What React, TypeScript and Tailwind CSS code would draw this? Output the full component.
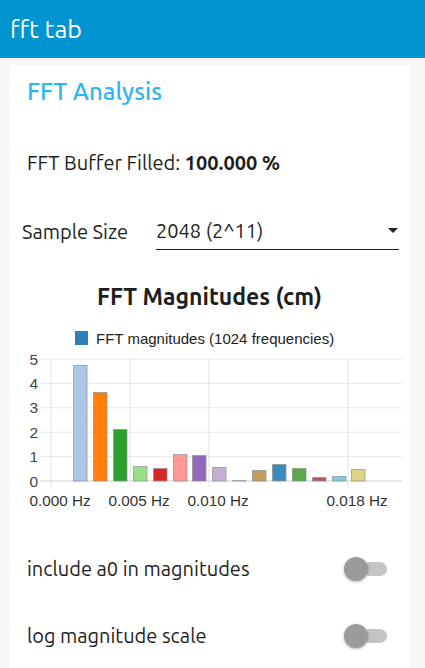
const bars = [
  { x: 73, top: 365, color: '#aec7e8' },
  { x: 93, top: 392, color: '#ff7f0e' },
  { x: 113, top: 429, color: '#2ca02c' },
  { x: 133, top: 466, color: '#98df8a' },
  { x: 153, top: 468, color: '#d62728' },
  { x: 173, top: 454, color: '#ff9896' },
  { x: 192, top: 455, color: '#9467bd' },
  { x: 212, top: 467, color: '#c5b0d5' },
  { x: 232, top: 480, color: '#c7c7c7' },
  { x: 252, top: 470, color: '#c49c5e' },
  { x: 272, top: 464, color: '#3b8bc2' },
  { x: 292, top: 468, color: '#59a84a' },
  { x: 312, top: 477, color: '#b0566f' },
  { x: 332, top: 476, color: '#80cbe3' },
  { x: 351, top: 469, color: '#dbd585' },
];

const yTicks = [5, 4, 3, 2, 1, 0];
const xTicks = [
  { x: 51, label: '0.000 Hz' },
  { x: 130, label: '0.005 Hz' },
  { x: 209, label: '0.010 Hz' },
  { x: 348, label: '0.018 Hz' },
];

function MagnitudeChart() {
  const base = 481;
  const unit = 24.4;
  return (
    <svg width={399} height={204} viewBox="10 311 399 204" className="block">
      <g fontFamily="'Liberation Sans', Arial, sans-serif">
        <rect x={75} y={331} width={13} height={14} fill="#2f7fba" />
        <text x={96} y={344} fontSize={15} fill="#222">
          FFT magnitudes (1024 frequencies)
        </text>
        {yTicks.map((t) => (
          <g key={t}>
            <line
              x1={40}
              x2={402}
              y1={base - t * unit}
              y2={base - t * unit}
              stroke={t === 0 ? '#cfcfcf' : '#e8e8e8'}
              strokeWidth={1}
            />
            <text x={38} y={base - t * unit + 5.5} fontSize={15.5} textAnchor="end" fill="#444">
              {t}
            </text>
          </g>
        ))}
        {xTicks.map((t) => (
          <g key={t.label}>
            <line x1={t.x} x2={t.x} y1={358} y2={487} stroke="#e2e2e2" strokeWidth={1} />
            <text x={t.x + 9} y={506} fontSize={15.3} textAnchor="middle" fill="#333">
              {t.label}
            </text>
          </g>
        ))}
        {bars.map((b, i) => (
          <rect
            key={i}
            x={b.x + 0.5}
            y={b.top + 0.5}
            width={13.5}
            height={Math.max(base - b.top - 0.5, 0.5)}
            fill={b.color}
            stroke="#8f8f8f"
            strokeOpacity={0.7}
            strokeWidth={1}
          />
        ))}
      </g>
    </svg>
  );
}

function Toggle() {
  return (
    <div className="relative h-[26px] w-[44px]">
      <div className="absolute left-[20px] top-[6px] h-[14px] w-[24px] rounded-full bg-[#c4c4c4]" />
      <div className="absolute left-[1px] top-[1px] h-[24px] w-[24px] rounded-full bg-[#9b9b9b] shadow-[0_1px_3px_rgba(0,0,0,0.3)]" />
    </div>
  );
}

export default function App() {
  return (
    <div
      className="min-h-[668px] bg-[#f7f7f7] text-[#1e1e1e]"
      style={{ fontFamily: "Ubuntu, 'Noto Sans', sans-serif" }}
    >
      <header className="flex h-[58px] items-center bg-[#0095d0] px-[10px]">
        <h1 className="text-[25px] leading-none text-white">fft tab</h1>
      </header>

      <main className="ml-[10px] mt-[7px] w-[399px] bg-white pt-[12px]">
        <h2 className="pl-[17px] text-[24px] font-medium leading-[30px] text-[#2bb6f0]">FFT Analysis</h2>

        <p className="mt-[44px] pl-[17px] text-[20px] leading-[24px]">
          FFT Buffer Filled: <span className="font-bold">100.000 %</span>
        </p>

        <div className="mt-[39px] flex h-[36px] items-center pl-[12px] pr-[10px]">
          <span className="w-[134px] text-[20px]">Sample Size</span>
          <div className="flex h-full flex-1 items-center justify-between border-b border-[#222] pb-[2px] pr-[1px]">
            <span className="text-[20px]">2048 (2^11)</span>
            <span className="h-0 w-0 border-x-[5px] border-t-[5px] border-x-transparent border-t-[#222]" />
          </div>
        </div>

        <h3 className="mt-[33px] text-center text-[23px] font-semibold leading-[28px]">FFT Magnitudes (cm)</h3>

        <MagnitudeChart />

        <div className="mt-[34px] flex h-[40px] items-center justify-between pl-[17px] pr-[22px]">
          <span className="text-[20px]">include a0 in magnitudes</span>
          <Toggle />
        </div>
        <div className="mt-[27px] flex h-[40px] items-center justify-between pl-[17px] pr-[22px]">
          <span className="text-[20px]">log magnitude scale</span>
          <Toggle />
        </div>
        <div className="h-[20px]" />
      </main>
    </div>
  );
}
